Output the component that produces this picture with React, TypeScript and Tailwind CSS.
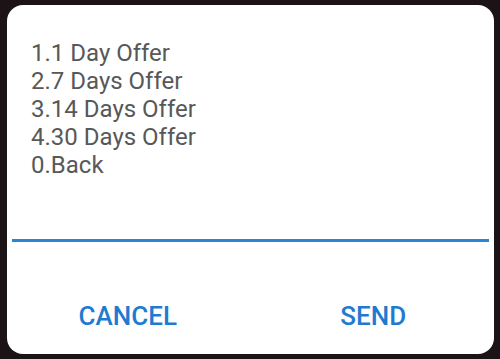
export default function App() {
  const lines = ["1.1 Day Offer", "2.7 Days Offer", "3.14 Days Offer", "4.30 Days Offer", "0.Back"];
  return (
    <div className="w-[500px] h-[359px] bg-[#1b1315] pt-[5px] pl-[7px] pr-[6px] pb-[5px]" style={{ fontFamily: "Roboto, 'Noto Sans', sans-serif" }}>
      <div className="w-full h-full bg-white rounded-[16px] flex flex-col">
        <div className="pl-[24px] pt-[34px] text-[24px] leading-[28px] text-[#585858]">
          {lines.map((l) => (
            <div key={l}>{l}</div>
          ))}
        </div>
        <div className="mx-[5px] mt-[60px] h-[3px] bg-[#2a85d4]" />
        <div className="flex mt-[59px] text-[26px] leading-[30px] font-medium text-[#1f7bd0]">
          <div className="w-1/2 flex justify-center pr-[2px]">CANCEL</div>
          <div className="w-1/2 flex justify-center pl-[2px]">SEND</div>
        </div>
      </div>
    </div>
  );
}
